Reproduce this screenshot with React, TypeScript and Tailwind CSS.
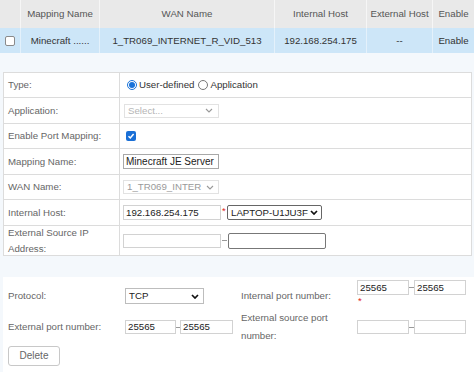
import React from "react";

const Chevron = ({ c = "#222", w = 1.6 }: { c?: string; w?: number }) => (
  <svg width="8" height="5" viewBox="0 0 8 5" className="shrink-0">
    <polyline points="1,1 4,4 7,1" fill="none" stroke={c} strokeWidth={w} />
  </svg>
);

const Dash = ({ w = "w-[6px]" }: { w?: string }) => (
  <span className={`${w} shrink-0 flex items-center justify-center`}>
    <span className="w-[5px] h-[1px] bg-[#999]" />
  </span>
);

const FormRow = ({
  label,
  h,
  children,
  last,
  twoLine,
}: {
  label: React.ReactNode;
  h: string;
  children?: React.ReactNode;
  last?: boolean;
  twoLine?: boolean;
}) => (
  <div className={`flex ${h} ${last ? "" : "border-b border-[#dcdcdc]"}`}>
    <div
      className={`w-[116px] shrink-0 border-r border-[#dcdcdc] pl-[4px] flex items-center text-[#666] ${
        twoLine ? "leading-[16px]" : "leading-[12px]"
      }`}
    >
      {label}
    </div>
    <div className="flex-1 flex items-center pl-[3px] whitespace-nowrap">{children}</div>
  </div>
);

export default function App() {
  return (
    <div className="w-[474px] h-[372px] overflow-hidden bg-[#f4f8fc] text-[9.7px] leading-[12px] text-[#555] font-['Liberation_Sans',Arial,sans-serif]">
      {/* Table */}
      <div className="w-[474px] whitespace-nowrap">
        <div className="flex h-[28px] bg-[#e9e9e9] text-[#555]">
          <div className="w-[21px] border-r border-[#f6f6f6]" />
          <div className="w-[79px] border-r border-[#f6f6f6] flex items-center justify-center">Mapping Name</div>
          <div className="w-[175px] border-r border-[#f6f6f6] flex items-center justify-center">WAN Name</div>
          <div className="w-[92px] border-r border-[#f6f6f6] flex items-center justify-center">Internal Host</div>
          <div className="w-[66px] border-r border-[#f6f6f6] flex items-center justify-center">External Host</div>
          <div className="w-[41px] flex items-center justify-center">Enable</div>
        </div>
        <div className="flex h-[25px] bg-[#cde6f8] text-[#333]">
          <div className="w-[21px] border-r border-[#e4f1fb] flex items-center justify-center">
            <span className="w-[10px] h-[10px] rounded-[2px] border border-[#8a8a8a] bg-white" />
          </div>
          <div className="w-[79px] border-r border-[#e4f1fb] flex items-center justify-center">Minecraft ......</div>
          <div className="w-[175px] border-r border-[#e4f1fb] flex items-center justify-center">1_TR069_INTERNET_R_VID_513</div>
          <div className="w-[92px] border-r border-[#e4f1fb] flex items-center justify-center">192.168.254.175</div>
          <div className="w-[66px] border-r border-[#e4f1fb] flex items-center justify-center">--</div>
          <div className="w-[41px] flex items-center justify-center">Enable</div>
        </div>
      </div>

      {/* Form box */}
      <div className="mt-[19px] ml-[3px] w-[469px] bg-white border border-[#dcdcdc]">
        <FormRow label="Type:" h="h-[25px]">
          <div className="flex items-center pl-[4px] text-[#333]">
            <span className="w-[10px] h-[10px] rounded-full border border-[#1a73d9] flex items-center justify-center">
              <span className="w-[6px] h-[6px] rounded-full bg-[#1a73d9]" />
            </span>
            <span className="ml-[2px]">User-defined</span>
            <span className="ml-[4px] w-[10px] h-[10px] rounded-full border border-[#777] bg-white" />
            <span className="ml-[2px]">Application</span>
          </div>
        </FormRow>
        <FormRow label="Application:" h="h-[26px]">
          <div className="ml-[1px] w-[95px] h-[14px] border border-[#e2e2e2] flex items-center justify-between pl-[3px] pr-[5px] text-[#b5b5b5]">
            <span>Select...</span>
            <Chevron c="#999" w={1.1} />
          </div>
        </FormRow>
        <FormRow label="Enable Port Mapping:" h="h-[25px]">
          <span className="ml-[3px] w-[10px] h-[10px] rounded-[2px] bg-[#1a6fd6] flex items-center justify-center">
            <svg width="8" height="8" viewBox="0 0 8 8">
              <polyline points="1.5,4.2 3.3,6 6.6,2" fill="none" stroke="white" strokeWidth="1.5" />
            </svg>
          </span>
        </FormRow>
        <FormRow label="Mapping Name:" h="h-[26px]">
          <div className="w-[96px] h-[15px] border border-[#a8a8a8] flex items-center pl-[2px] text-[#222] text-[10px] overflow-hidden">
            Minecraft JE Server
          </div>
        </FormRow>
        <FormRow label="WAN Name:" h="h-[25px]">
          <div className="w-[96px] h-[14px] border border-[#e2e2e2] flex items-center justify-between pl-[3px] pr-[4px] text-[#9a9a9a]">
            <span>1_TR069_INTER</span>
            <Chevron c="#999" w={1.1} />
          </div>
        </FormRow>
        <FormRow label="Internal Host:" h="h-[26px]">
          <div className="w-[98px] h-[15px] border border-[#d2d2d2] flex items-center pl-[2px] text-[#222]">192.168.254.175</div>
          <span className="w-[6px] text-center text-[#e02020] self-start mt-[6px] leading-[10px]">*</span>
          <div className="w-[95px] h-[15px] border border-[#666] rounded-[2px] flex items-center justify-between pl-[3px] pr-[3px] text-[#222] overflow-hidden">
            <span>LAPTOP-U1JU3F</span>
            <Chevron c="#111" w={1.7} />
          </div>
        </FormRow>
        <FormRow
          label={
            <span>
              External Source IP
              <br />
              Address:
            </span>
          }
          h="h-[29px]"
          last
          twoLine
        >
          <div className="w-[98px] h-[14px] border border-[#d2d2d2] mt-[1px]" />
          <Dash w="w-[7px]" />
          <div className="w-[98px] h-[16px] border border-[#777] rounded-[2px]" />
        </FormRow>
      </div>

      {/* Bottom section */}
      <div className="mt-[21px] ml-[3px] w-[471px] h-[96px] bg-white pl-[5px] pt-[3px] whitespace-nowrap">
        <div className="flex h-[29px] items-start">
          <div className="w-[117px] mt-[10px] text-[#666]">Protocol:</div>
          <div className="w-[79px] h-[16px] mt-[8px] border border-[#bdbdbd] flex items-center justify-between pl-[3px] pr-[4px] text-[#222]">
            <span>TCP</span>
            <Chevron c="#111" w={1.7} />
          </div>
          <div className="w-[37px]" />
          <div className="w-[116px] mt-[10px] text-[#666]">Internal port number:</div>
          <div className="flex flex-col">
            <div className="flex">
              <div className="w-[52px] h-[15px] border border-[#d2d2d2] flex items-center pl-[2px] text-[#222]">25565</div>
              <Dash w="w-[5px]" />
              <div className="w-[52px] h-[15px] border border-[#d2d2d2] flex items-center pl-[2px] text-[#222]">25565</div>
            </div>
            <span className="text-[#e02020] leading-[10px] mt-[1px] pl-[1px]">*</span>
          </div>
        </div>
        <div className="flex h-[36px] items-center">
          <div className="w-[117px] text-[#666]">External port number:</div>
          <div className="flex w-[116px]">
            <div className="w-[51px] h-[14px] border border-[#d2d2d2] flex items-center pl-[2px] text-[#222]">25565</div>
            <Dash w="w-[4px]" />
            <div className="w-[53px] h-[14px] border border-[#d2d2d2] flex items-center pl-[2px] text-[#222]">25565</div>
          </div>
          <div className="w-[116px] text-[#666] leading-[18px]">
            External source port
            <br />
            number:
          </div>
          <div className="flex">
            <div className="w-[52px] h-[14px] border border-[#d2d2d2]" />
            <Dash w="w-[5px]" />
            <div className="w-[52px] h-[14px] border border-[#d2d2d2]" />
          </div>
        </div>
        <button className="mt-[1px] w-[52px] h-[20px] border border-[#c8c8c8] rounded-[3px] bg-white text-[#666] text-[10px] flex items-center justify-center">
          Delete
        </button>
      </div>
    </div>
  );
}
